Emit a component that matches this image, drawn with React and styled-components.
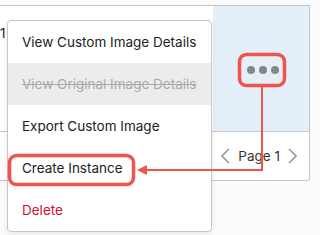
import React from "react";
import styled, { createGlobalStyle } from "styled-components";

const GlobalStyle = createGlobalStyle`
  html, body {
    margin: 0;
    padding: 0;
    background: #fbfbfb;
    font-family: Inter, "Liberation Sans", sans-serif;
    -webkit-font-smoothing: antialiased;
  }
  #root {
    position: relative;
    width: 320px;
    height: 235px;
    overflow: hidden;
  }
`;

const RED = "#f0544a";

const Table = styled.div`
  margin-top: 5px;
  width: 309px;
  background: #ffffff;
  border-top: 1px solid #c4c4c4;
  border-right: 1px solid #c4c4c4;
  border-bottom: 1px solid #c4c4c4;
  border-bottom-right-radius: 3px;
  display: flex;
  flex-direction: column;
`;

const Row = styled.div`
  display: flex;
  height: 125px;
  border-bottom: 1px solid #c8c8c8;
`;

const NameCell = styled.div`
  flex: 1;
  padding: 19px 0 0 0;
  font-size: 13.5px;
  color: #222;
`;

const ActionCell = styled.div`
  width: 96px;
  background: #e4effa;
  display: flex;
  align-items: center;
  justify-content: center;
  padding: 2px 0 0 4px;
  box-sizing: border-box;
`;

const Dots = styled.div`
  display: flex;
  gap: 4px;
`;

const Dot = styled.span`
  width: 8px;
  height: 8px;
  border-radius: 50%;
  background: #868686;
`;

const Footer = styled.div`
  height: 48px;
  display: flex;
  align-items: center;
  justify-content: flex-end;
  gap: 8px;
  padding: 0 12px 0 0;
  box-sizing: border-box;
`;

const PageLabel = styled.span`
  font-size: 13.5px;
  color: #333;
`;

const Menu = styled.ul`
  position: absolute;
  left: 7px;
  top: 20px;
  width: 203px;
  margin: 0;
  padding: 0;
  list-style: none;
  background: #ffffff;
  border: 1px solid #c6c6c6;
  border-radius: 4px;
  box-shadow: 0 2px 6px rgba(0, 0, 0, 0.08);
`;

const Item = styled.li`
  height: 42px;
  display: flex;
  align-items: center;
  padding-left: 14px;
  font-size: 13.5px;
  color: ${(p) => (p.$danger ? "#d0102f" : p.$disabled ? "#aaaaaa" : "#222222")};
  background: ${(p) => (p.$disabled ? "#ececec" : "transparent")};
  text-decoration: ${(p) => (p.$disabled ? "line-through" : "none")};
  white-space: nowrap;
`;

const Overlay = styled.svg`
  position: absolute;
  left: 0;
  top: 0;
  pointer-events: none;
`;

const Chevron = ({ dir }) => (
  <svg width="9" height="16" viewBox="0 0 9 16">
    <polyline
      points={dir === "left" ? "8,1 1,8 8,15" : "1,1 8,8 1,15"}
      fill="none"
      stroke="#9a9a9a"
      strokeWidth="1.6"
    />
  </svg>
);

export default function App() {
  return (
    <>
      <GlobalStyle />
      <Table>
        <Row>
          <NameCell>1</NameCell>
          <ActionCell>
            <Dots>
              <Dot />
              <Dot />
              <Dot />
            </Dots>
          </ActionCell>
        </Row>
        <Footer>
          <Chevron dir="left" />
          <PageLabel>Page 1</PageLabel>
          <Chevron dir="right" />
        </Footer>
      </Table>

      <Menu>
        <Item>View Custom Image Details</Item>
        <Item $disabled>View Original Image Details</Item>
        <Item>Export Custom Image</Item>
        <Item>Create Instance</Item>
        <Item $danger>Delete</Item>
      </Menu>

      <Overlay width="320" height="235" viewBox="0 0 320 235">
        <rect x="239.5" y="54.5" width="45" height="31" rx="7" fill="none" stroke={RED} strokeWidth="3.5" />
        <rect x="9.5" y="155.5" width="124" height="29" rx="7" fill="none" stroke={RED} strokeWidth="3.5" />
        <polyline points="262,87 262,170 146,170" fill="none" stroke={RED} strokeWidth="2" />
        <polygon points="137,170 147,165 147,175" fill={RED} />
      </Overlay>
    </>
  );
}
